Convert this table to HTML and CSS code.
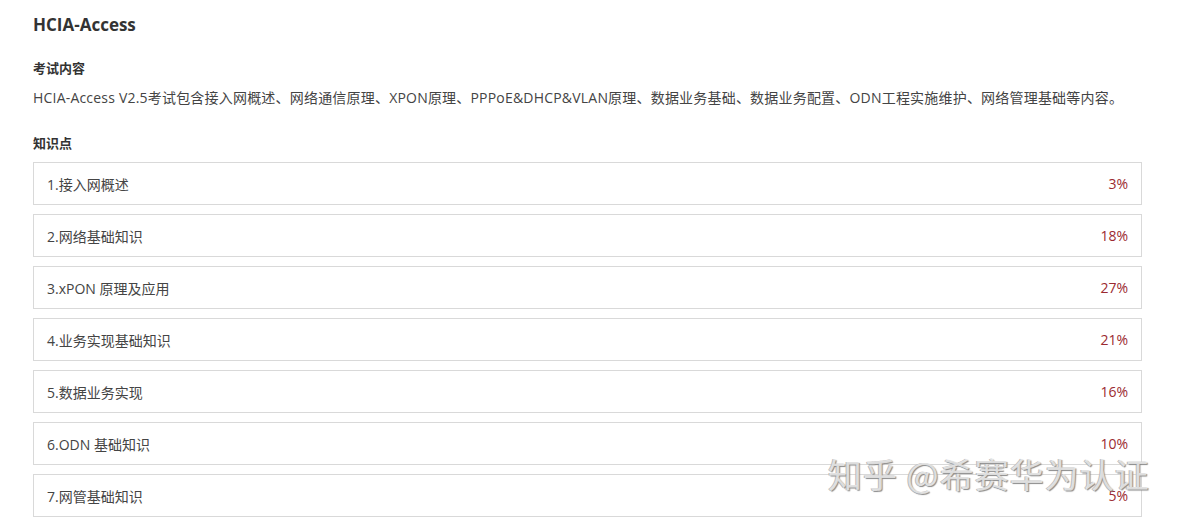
FILE: index.html
```html
<!DOCTYPE html>
<html lang="zh-CN">
<head>
<meta charset="utf-8">
<title>HCIA-Access</title>
<link rel="stylesheet" href="styles.css">
</head>
<body>
<div class="page">
  <h1 class="title">HCIA-Access</h1>
  <h2 class="label label-first">考试内容</h2>
  <p class="desc">HCIA-Access V2.5考试包含接入网概述、网络通信原理、XPON原理、PPPoE&amp;DHCP&amp;VLAN原理、数据业务基础、数据业务配置、ODN工程实施维护、网络管理基础等内容。</p>
  <h2 class="label label-second">知识点</h2>
  <ul class="list">
    <li class="row"><span class="name">1.接入网概述</span><span class="pct">3%</span></li>
    <li class="row"><span class="name">2.网络基础知识</span><span class="pct">18%</span></li>
    <li class="row"><span class="name">3.xPON 原理及应用</span><span class="pct">27%</span></li>
    <li class="row"><span class="name">4.业务实现基础知识</span><span class="pct">21%</span></li>
    <li class="row"><span class="name">5.数据业务实现</span><span class="pct">16%</span></li>
    <li class="row"><span class="name">6.ODN 基础知识</span><span class="pct">10%</span></li>
    <li class="row"><span class="name">7.网管基础知识</span><span class="pct">5%</span></li>
  </ul>
  <div class="watermark">知乎 @希赛华为认证</div>
</div>
</body>
</html>
```
FILE: styles.css
```css
html, body {
  margin: 0;
  padding: 0;
  background: #fff;
}
body {
  font-family: "Open Sans", "Noto Sans CJK SC", sans-serif;
  color: #333;
}
.page {
  position: relative;
  width: 1109px;
  padding: 13px 0 0 33px;
}
.title {
  margin: 0;
  font-size: 17px;
  line-height: 24px;
  font-weight: 700;
  color: #333;
}
.label {
  margin: 0;
  font-size: 13px;
  line-height: 20px;
  font-weight: 700;
  color: #333;
}
.label-first {
  margin-top: 21px;
}
.label-second {
  margin-top: 25px;
}
.desc {
  margin: 10px 0 0;
  font-size: 14px;
  line-height: 20px;
  letter-spacing: 0.2px;
  color: #444;
}
.list {
  list-style: none;
  margin: 9px 0 0;
  padding: 0;
  display: flex;
  flex-direction: column;
  gap: 9px;
}
.row {
  display: flex;
  justify-content: space-between;
  align-items: center;
  height: 41px;
  padding: 0 13px;
  border: 1px solid #d9d9d9;
  font-size: 14px;
  color: #444;
}
.pct {
  color: #9b2a30;
}
.watermark {
  position: absolute;
  left: 828px;
  top: 452px;
  font-family: "Noto Sans CJK SC", sans-serif;
  font-size: 34px;
  line-height: 44px;
  color: rgba(235, 235, 235, 0.85);
  text-shadow: 1px 1px 1px #8a8a8a, -1px 0 0 #bbb;
  letter-spacing: 1px;
  white-space: nowrap;
}
```
